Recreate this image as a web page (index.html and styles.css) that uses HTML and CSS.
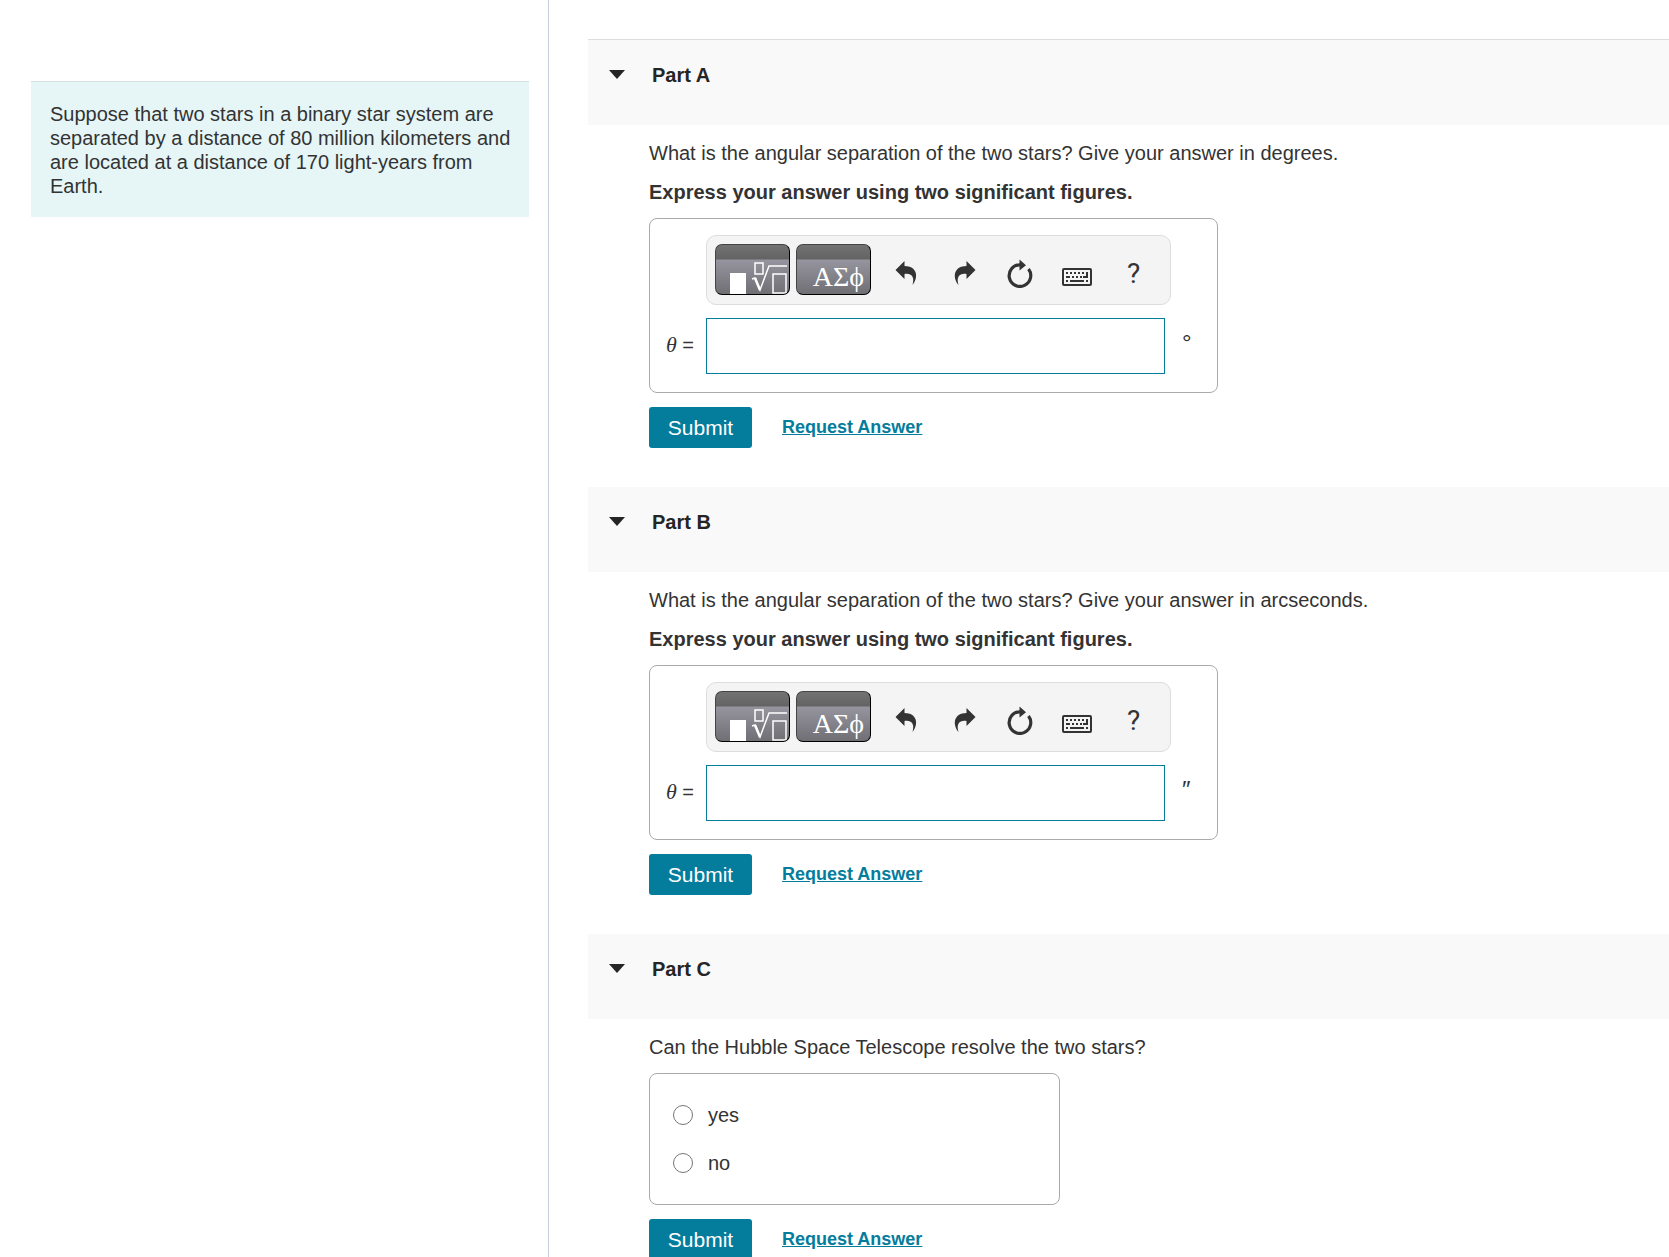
FILE: index.html
```html
<!DOCTYPE html>
<html lang="en">
<head>
  <meta charset="UTF-8">
  <meta name="viewport" content="width=device-width, initial-scale=1.0">
  <title>Binary Star System</title>
  <link rel="stylesheet" href="styles.css">
</head>
<body>

  <!-- Shared icons -->
  <svg class="icon-defs" aria-hidden="true">
    <symbol id="iconRoot" viewBox="1 1 73 49">
      <rect x="15" y="29" width="16" height="22" fill="#fff"/>
      <g fill="none" stroke="#fff">
        <rect x="40" y="19" width="8" height="11" stroke-width="1.500"/>
        <path d="M37 35 L40 34 L45 46 L54 22 H72" stroke-width="1.500"/>
        <path d="M40 34 L45 46" stroke-width="2.500"/>
        <rect x="58" y="30" width="13" height="19" stroke-width="1.500"/>
      </g>
    </symbol>
    <symbol id="iconUndo" viewBox="0 0 30 30">
      <path d="M13.500 3 L4.500 12 L13.500 21 V16 C20 15 24 18 21.500 27 C28 19 26 8 13.500 8 Z"/>
    </symbol>
    <symbol id="iconRedo" viewBox="0 0 30 30">
      <path d="M18.500 3 L27.500 12 L18.500 21 V16 C12 15 8 18 10.500 27 C4 19 6 8 18.500 8 Z"/>
    </symbol>
    <symbol id="iconReset" viewBox="0 0 30 30">
      <path d="M23.500 11 A10.800 10.800 0 1 1 15 6.800" fill="none" stroke="#333" stroke-width="3.200"/>
      <path d="M14.500 1.500 L21 7.200 L14.500 12.500 Z"/>
    </symbol>
    <symbol id="iconKeyboard" viewBox="0 0 30 30">
      <rect x="1" y="11" width="28" height="16" rx="1" fill="none" stroke="#333" stroke-width="2"/>
      <path d="M4 15 H23" fill="none" stroke="#333" stroke-width="2" stroke-dasharray="2 2"/>
      <path d="M4 19 H8 M10 19 H12 M14 19 H16 M18 19 H20 M21 19 H26 M25 14 V20" fill="none" stroke="#333" stroke-width="2"/>
      <path d="M4 23 H6 M8 23 H22 M24 23 H26" fill="none" stroke="#333" stroke-width="2"/>
    </symbol>
  </svg>

  <div class="layout">
    <aside class="sidebar">
      <div class="intro">Suppose that two stars in a binary star system are separated by a distance of 80 million kilometers and are located at a distance of 170 light-years from Earth.</div>
    </aside>

    <main class="content">
      <!-- Part A -->
      <section class="part">
        <header class="part-header">
          <span class="arrow"></span>
          <h2>Part A</h2>
        </header>
        <div class="part-body">
          <p>What is the angular separation of the two stars? Give your answer in degrees.</p>
          <p class="instructions">Express your answer using two significant figures.</p>
          <div class="answer-box">
            <div class="toolbar">
              <button type="button" class="palette" aria-label="Templates"><svg><use href="#iconRoot"/></svg></button>
              <button type="button" class="palette greek">ΑΣϕ</button>
              <div class="tools">
                <button type="button" class="tool" aria-label="Undo"><svg><use href="#iconUndo"/></svg></button>
                <button type="button" class="tool" aria-label="Redo"><svg><use href="#iconRedo"/></svg></button>
                <button type="button" class="tool" aria-label="Reset"><svg><use href="#iconReset"/></svg></button>
                <button type="button" class="tool" aria-label="Keyboard shortcuts"><svg><use href="#iconKeyboard"/></svg></button>
                <button type="button" class="tool help">?</button>
              </div>
            </div>
            <label for="answerA"><i>θ</i> =</label>
            <input type="text" id="answerA" class="answer-input">
            <span class="unit">°</span>
          </div>
          <div class="actions">
            <button type="submit" class="submit">Submit</button>
            <a href="#">Request Answer</a>
          </div>
        </div>
      </section>

      <!-- Part B -->
      <section class="part">
        <header class="part-header">
          <span class="arrow"></span>
          <h2>Part B</h2>
        </header>
        <div class="part-body">
          <p>What is the angular separation of the two stars? Give your answer in arcseconds.</p>
          <p class="instructions">Express your answer using two significant figures.</p>
          <div class="answer-box">
            <div class="toolbar">
              <button type="button" class="palette" aria-label="Templates"><svg><use href="#iconRoot"/></svg></button>
              <button type="button" class="palette greek">ΑΣϕ</button>
              <div class="tools">
                <button type="button" class="tool" aria-label="Undo"><svg><use href="#iconUndo"/></svg></button>
                <button type="button" class="tool" aria-label="Redo"><svg><use href="#iconRedo"/></svg></button>
                <button type="button" class="tool" aria-label="Reset"><svg><use href="#iconReset"/></svg></button>
                <button type="button" class="tool" aria-label="Keyboard shortcuts"><svg><use href="#iconKeyboard"/></svg></button>
                <button type="button" class="tool help">?</button>
              </div>
            </div>
            <label for="answerB"><i>θ</i> =</label>
            <input type="text" id="answerB" class="answer-input">
            <span class="unit">″</span>
          </div>
          <div class="actions">
            <button type="submit" class="submit">Submit</button>
            <a href="#">Request Answer</a>
          </div>
        </div>
      </section>

      <!-- Part C -->
      <section class="part">
        <header class="part-header">
          <span class="arrow"></span>
          <h2>Part C</h2>
        </header>
        <div class="part-body">
          <p>Can the Hubble Space Telescope resolve the two stars?</p>
          <div class="choices">
            <div class="choice">
              <input type="radio" name="resolve" id="resolveYes">
              <label for="resolveYes">yes</label>
            </div>
            <div class="choice">
              <input type="radio" name="resolve" id="resolveNo">
              <label for="resolveNo">no</label>
            </div>
          </div>
          <div class="actions">
            <button type="submit" class="submit">Submit</button>
            <a href="#">Request Answer</a>
          </div>
        </div>
      </section>
    </main>
  </div>

</body>
</html>
```
FILE: styles.css
```css
* {
  box-sizing: border-box;
}

body {
  margin: 0;
  background-color: #fff;
  color: #333;
  font-family: "Liberation Sans", Arial, sans-serif;
  font-size: 20px;
  line-height: 24px;
}

button,
input {
  font-family: inherit;
  margin: 0;
}

.icon-defs {
  display: none;
}

.layout {
  display: flex;
  height: 100vh;
}

/* Problem statement */
.sidebar {
  flex: 0 0 549px;
  padding: 81px 19px 0 31px;
  border-right: 1px solid #c4cdd9;
}

.intro {
  padding: 20px 8px 19px 19px;
  border-top: 1px solid #d5dfe4;
  background-color: #e6f6f7;
}

/* Parts scroll on their own */
.content {
  flex: 1;
  padding: 39px 0 0 39px;
  overflow-y: auto;
  scrollbar-width: none;
}

.part-header {
  display: flex;
  height: 85px;
  padding: 23px 21px;
  background-color: #f9f9f9;
}

.part:first-child .part-header {
  height: 86px;
  border-top: 1px solid #ddd;
}

.part-header h2 {
  margin: 0;
  color: #252525;
  font-size: 20px;
}

.arrow {
  width: 16px;
  height: 9px;
  margin: 7px 27px 0 0;
  background-color: #252525;
  clip-path: polygon(0 0, 100% 0, 50% 100%);
}

.part-body {
  padding: 16px 16px 39px 61px;
}

.part-body p {
  margin: 0 0 14px;
}

.part-body .instructions {
  margin-top: 15px;
  font-weight: bold;
}

/* Answer box */
.answer-box {
  display: grid;
  grid-template-columns: 40px 459px 1fr;
  row-gap: 13px;
  align-items: center;
  width: 569px;
  padding: 16px 16px 18px;
  border: 1px solid #aaa;
  border-radius: 8px;
}

.toolbar {
  grid-column: 2 / 4;
  display: flex;
  width: 465px;
  height: 70px;
  padding: 8px;
  gap: 6px;
  background-color: #f4f4f4;
  border: 1px solid #ddd;
  border-radius: 10px;
}

.palette {
  width: 75px;
  height: 51px;
  padding: 0;
  border: 1px solid #000;
  border-top-color: #444;
  border-left-color: #444;
  border-radius: 7px;
  background: linear-gradient(#737373, #636363 14px, #96949e 15px, #706f74);
  overflow: hidden;
}

.palette svg {
  display: block;
  width: 73px;
  height: 49px;
}

.greek {
  padding: 14px 6px 0 0;
  color: #fff;
  font-family: "Liberation Serif", serif;
  font-size: 28px;
  line-height: 32px;
  text-align: right;
}

.tools {
  display: flex;
}

.tool {
  width: 57px;
  height: 58px;
  padding: 0;
  border: 0;
  background: none;
  color: #333;
  fill: #333;
}

.tool svg {
  display: block;
  width: 30px;
  height: 30px;
  margin: 0 auto;
}

.help {
  font-family: Roboto, sans-serif;
  font-size: 28px;
}

.answer-box label {
  padding-bottom: 2px;
  font-size: 20px;
}

.answer-box i {
  font-family: "Liberation Serif", serif;
  font-size: 22px;
}

.answer-input {
  width: 100%;
  height: 56px;
  padding: 0 10px;
  border: 1px solid #047c9c;
  background-color: #fff;
  font-size: 20px;
}

.unit {
  padding: 0 0 6px 17px;
  font-size: 24px;
}

.actions {
  display: flex;
  align-items: center;
  gap: 30px;
  margin-top: 14px;
}

.submit {
  width: 103px;
  height: 41px;
  padding: 0;
  border: 0;
  border-radius: 3px;
  background-color: #047c9c;
  color: #fff;
  font-size: 21px;
}

.actions a {
  padding-bottom: 2px;
  color: #047c9c;
  font-size: 18px;
  font-weight: bold;
}

/* Multiple choice */
.choices {
  width: 411px;
  padding: 17px 23px;
  border: 1px solid #aaa;
  border-radius: 8px;
}

.choice {
  display: flex;
  align-items: center;
  gap: 15px;
  height: 48px;
}

.choice input {
  width: 20px;
  height: 20px;
}
```
